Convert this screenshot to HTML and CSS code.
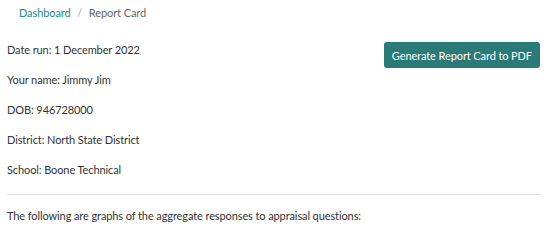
FILE: index.html
```html
<!DOCTYPE html>
<html lang="en">
<head>
  <meta charset="UTF-8" />
  <title>Report Card</title>
  <link rel="stylesheet" href="styles.css">
</head>
<body>
  <nav class="breadcrumb">
    <a href="#">Dashboard</a>
    <span class="sep">/</span>
    <span class="current">Report Card</span>
  </nav>

  <div class="report">
    <div class="top">
      <div class="info">
        <p>Date run: 1 December 2022</p>
        <p>Your name: Jimmy Jim</p>
        <p>DOB: 946728000</p>
        <p>District: North State District</p>
        <p>School: Boone Technical</p>
      </div>
      <button class="pdf-btn">Generate Report Card to PDF</button>
    </div>
    <hr>
    <p>The following are graphs of the aggregate responses to appraisal questions:</p>
  </div>
</body>
</html>
```

FILE: styles.css
```css
body {
  margin: 0;
  padding: 0 6px 0 7px;
  font-family: Lato, sans-serif;
  font-size: 11px;
  letter-spacing: -0.1px;
  color: #333;
  background: #fff;
}
.breadcrumb {
  padding: 5px 0 0 12px;
  height: 37px;
  line-height: 16px;
}
.breadcrumb a {
  color: #1f8a8a;
  text-decoration: none;
}
.breadcrumb .sep {
  color: #aaa;
  margin: 0 4px;
}
.breadcrumb .current {
  color: #666;
}
.top {
  display: flex;
  justify-content: space-between;
  align-items: flex-start;
}
.info p {
  margin: 0 0 14px;
  line-height: 16px;
}
p {
  margin: 0;
  line-height: 16px;
}
.pdf-btn {
  background: #2a7a78;
  color: #fff;
  border: none;
  border-radius: 3px;
  padding: 5px 8px;
  font-family: inherit;
  font-size: 11px;
  letter-spacing: -0.1px;
  height: 26px;
  cursor: pointer;
}
hr {
  border: none;
  border-top: 1px solid #ddd;
  margin: 2px 0 13px;
}
```
